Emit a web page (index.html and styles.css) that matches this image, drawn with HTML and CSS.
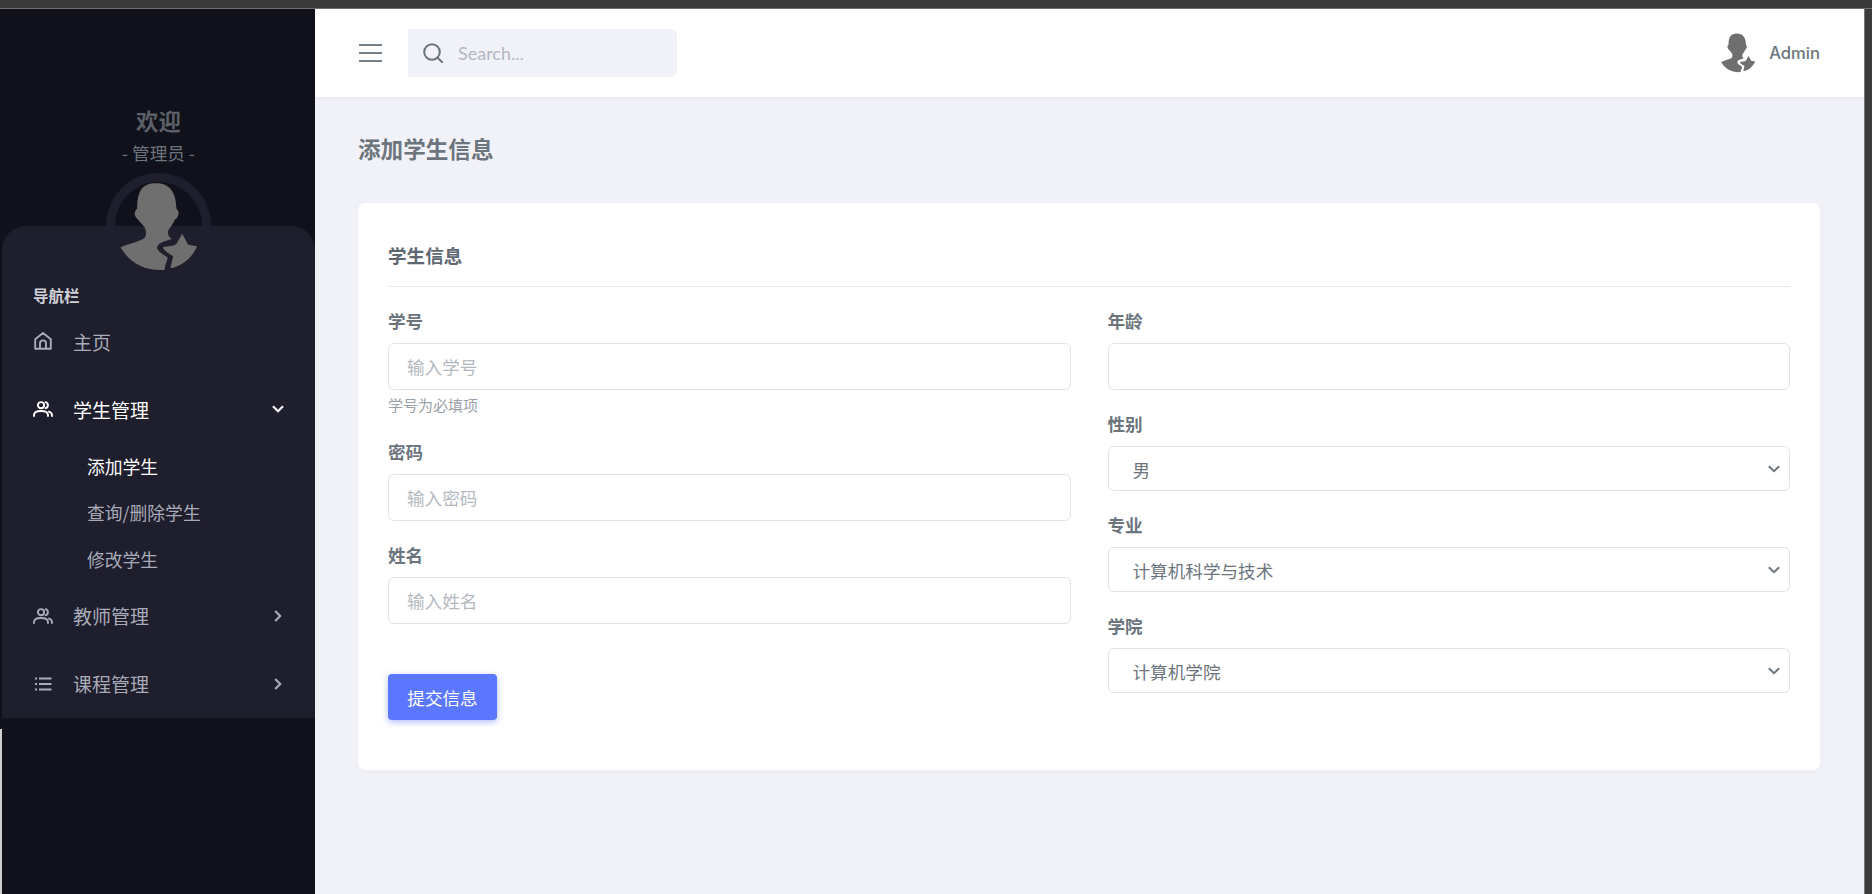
FILE: index.html
```html
<!DOCTYPE html>
<html lang="zh-CN">
<head>
<meta charset="utf-8">
<title>添加学生信息</title>
<link rel="stylesheet" href="styles.css">
</head>
<body>
<svg class="defs" width="0" height="0" aria-hidden="true">
  <symbol id="person" viewBox="355 545 242 270">
    <path fill="#6f6f6f" d="M468 549C508 549 528 572 530 626C540 632 538 650 525 658C520 668 514 678 508 686C500 696 506 710 516 716C498 722 476 726 472 740C470 752 490 762 504 772C500 785 495 796 494 809C430 812 388 785 362 741C385 730 410 727 430 716C442 708 440 690 432 678C425 670 420 664 415 658C402 650 402 632 412 625C412 572 428 549 468 549Z"/>
    <path fill="#6f6f6f" d="M547 700L565 733L592 738C578 770 550 796 512 804C514 790 518 778 520 768C505 758 488 748 490 740C505 736 522 738 530 730Z"/>
  </symbol>
  <symbol id="users" viewBox="0 0 20 16">
    <circle cx="8" cy="4.2" r="3.1" fill="none" stroke="currentColor" stroke-width="1.9"/>
    <path d="M1 15v-.8C1 11.6 3.5 10 8 10s7 1.6 7 4.2v.8" fill="none" stroke="currentColor" stroke-width="1.9" stroke-linecap="round"/>
    <path d="M12.6 1.2a3.1 3.1 0 0 1 0 6M16 10.6c1.8.6 3 1.8 3 3.6v.8" fill="none" stroke="currentColor" stroke-width="1.9" stroke-linecap="round"/>
  </symbol>
</svg>

<div class="topbar"></div>
<div class="frame">
  <div class="edge-left"><div class="edge-dark"></div><div class="edge-light"></div></div>

  <aside class="sidebar">
    <div class="profile">
      <div class="welcome">欢迎</div>
      <div class="role">- 管理员 -</div>
      <div class="avatar">
        <svg class="avatar-img"><use href="#person"/></svg>
      </div>
    </div>
    <nav class="panel">
      <div class="nav-label">导航栏</div>
      <a class="nav-item">
        <svg class="nav-icon" viewBox="0 0 20 18" fill="none" stroke="currentColor" stroke-width="1.9" stroke-linejoin="round"><path d="M2.2 16.8V7.2L10 1l7.8 6.2v9.6zM7 16.8v-5.4a3 3 0 0 1 6 0v5.4"/></svg>
        <span>主页</span>
      </a>
      <a class="nav-item active">
        <svg class="nav-icon"><use href="#users"/></svg>
        <span>学生管理</span>
        <svg class="chev chev-down" viewBox="0 0 12 8" fill="none" stroke="currentColor" stroke-width="2.2"><path d="M1 1.2l5 5 5-5"/></svg>
      </a>
      <div class="sub-item active">添加学生</div>
      <div class="sub-item">查询/删除学生</div>
      <div class="sub-item">修改学生</div>
      <a class="nav-item">
        <svg class="nav-icon"><use href="#users"/></svg>
        <span>教师管理</span>
        <svg class="chev chev-right" viewBox="0 0 8 12" fill="none" stroke="currentColor" stroke-width="2.2"><path d="M1.2 1l5 5-5 5"/></svg>
      </a>
      <a class="nav-item">
        <svg class="nav-icon" viewBox="0 0 20 14" fill="none" stroke="currentColor" stroke-width="1.9"><path d="M6 1.5h12.5M6 7h12.5M6 12.5h12.5M2 1.5h2M2 7h2M2 12.5h2"/></svg>
        <span>课程管理</span>
        <svg class="chev chev-right" viewBox="0 0 8 12" fill="none" stroke="currentColor" stroke-width="2.2"><path d="M1.2 1l5 5-5 5"/></svg>
      </a>
    </nav>
    <div class="sidebar-rest"></div>
  </aside>

  <div class="content">
    <header class="header">
      <div class="hamburger"><i></i><i></i><i></i></div>
      <div class="search">
        <svg class="search-icon" viewBox="0 0 20 20" fill="none" stroke="#6c757d" stroke-width="2"><circle cx="9" cy="9" r="7.8"/><path d="M14.6 14.6l4.6 4.6" stroke-linecap="round"/></svg>
        <span class="search-text">Search...</span>
      </div>
      <div class="user">
        <svg class="user-img"><use href="#person"/></svg>
        <span class="user-name">Admin</span>
      </div>
    </header>

    <main class="main">
      <h1 class="page-title">添加学生信息</h1>
      <section class="card">
        <h2 class="card-title">学生信息</h2>
        <form class="form-grid">
          <div class="col">
            <div class="group group-hint">
              <label class="label">学号</label>
              <input class="field" placeholder="输入学号">
              <small class="hint">学号为必填项</small>
            </div>
            <div class="group">
              <label class="label">密码</label>
              <input class="field" placeholder="输入密码">
            </div>
            <div class="group">
              <label class="label">姓名</label>
              <input class="field" placeholder="输入姓名">
            </div>
            <button class="submit" type="button">提交信息</button>
          </div>
          <div class="col">
            <div class="group">
              <label class="label">年龄</label>
              <input class="field">
            </div>
            <div class="group">
              <label class="label">性别</label>
              <select class="field field-select"><option>男</option></select>
            </div>
            <div class="group">
              <label class="label">专业</label>
              <select class="field field-select"><option>计算机科学与技术</option></select>
            </div>
            <div class="group">
              <label class="label">学院</label>
              <select class="field field-select"><option>计算机学院</option></select>
            </div>
          </div>
        </form>
      </section>
    </main>
  </div>

  <div class="edge-right"></div>
</div>
</body>
</html>
```

FILE: styles.css
```css
* { box-sizing: border-box; }
html, body { margin: 0; height: 100%; }
body {
  font-family: "Noto Sans CJK SC", "Liberation Sans", sans-serif;
  background: #f1f2f8;
  color: #6c757d;
  overflow: hidden;
  height: 894px;
  display: flex;
  flex-direction: column;
}
.defs { position: absolute; }
.topbar { height: 9px; flex: none; background: #3a3a3a; border-bottom: 1px solid #707070; }
.frame { flex: 1; display: flex; min-height: 0; }

.edge-left { width: 2px; flex: none; display: flex; flex-direction: column; }
.edge-dark { height: 720px; background: #10111a; }
.edge-light { flex: 1; background: #cfcfcf; }
.edge-right { width: 8px; flex: none; background: #3c3c3c; border-left: 1px solid #777; }

.sidebar { width: 313px; flex: none; display: flex; flex-direction: column; background: #10111a; }
.profile { height: 217px; flex: none; display: flex; flex-direction: column; align-items: center; padding-top: 93px; }
.welcome { font-size: 22.4px; line-height: 36px; font-weight: 700; color: #5b6068; }
.role { font-size: 17.6px; line-height: 24px; margin-top: 3px; color: #6c757d; }
.avatar { width: 105px; height: 105px; flex: none; margin-top: 8px; border-radius: 50%; border: 9px solid #1e1e2d; position: relative; }
.avatar-img { position: absolute; z-index: 2; left: 3px; top: 0; width: 81px; height: 90px; }

.panel { position: relative; z-index: 1; flex: none; height: 492px; background: #1e1e2d; border-radius: 24px 24px 0 0; padding-top: 57px; color: #a9acb8; }
.nav-label { font-size: 15.5px; line-height: 24px; font-weight: 700; color: #cfd0d8; padding-left: 31px; }
.nav-item { height: 68px; display: flex; align-items: center; font-size: 19px; padding-left: 31px; padding-right: 31px; }
.nav-item span { flex: 1; margin-left: 20px; }
.nav-item.active, .sub-item.active { color: #fff; }
.nav-icon { width: 20px; height: 18px; flex: none; }
.chev { flex: none; }
.chev-down { width: 12px; height: 8px; }
.chev-right { width: 8px; height: 12px; margin-right: 2px; }
.sub-item { height: 46.3px; line-height: 47px; font-size: 17.8px; padding-left: 85px; }
.sidebar-rest { flex: 1; }

.content { flex: 1; min-width: 0; display: flex; flex-direction: column; }
.header { height: 88px; flex: none; background: #fff; display: flex; align-items: center; padding: 0 44px; box-shadow: 0 1px 4px rgba(40, 40, 80, .05); }
.hamburger { width: 23px; display: flex; flex-direction: column; gap: 5.6px; margin-right: 26px; }
.hamburger i { display: block; height: 2.4px; background: #74808a; }
.search { width: 269px; height: 48px; background: #f1f2f8; border-radius: 0 6px 6px 0; display: flex; align-items: center; padding-left: 15px; }
.search-icon { width: 20px; height: 20px; flex: none; }
.search-text { margin-left: 15px; font-family: "Lato", sans-serif; font-size: 18px; color: #b3b7c0; }
.user { margin-left: auto; display: flex; align-items: center; }
.user-img { width: 36px; height: 40px; }
.user-name { margin-left: 13px; font-family: "Inter", sans-serif; font-size: 16.6px; font-weight: 500; color: #6c757d; }

.main { flex: 1; padding: 35px 44px 0 43px; }
.page-title { margin: 0; font-size: 22.6px; line-height: 34px; font-weight: 700; color: #6c757d; }
.card { margin-top: 37px; height: 567px; background: #fff; border-radius: 7px; padding: 38px 30px 0; box-shadow: 0 2px 6px rgba(40, 40, 80, .03); }
.card-title { margin: 0; font-size: 18.6px; line-height: 28px; font-weight: 700; color: #5f6872; padding-bottom: 17px; border-bottom: 1px solid #e5e8ee; }
.form-grid { margin-top: 21px; display: grid; grid-template-columns: 1fr 1fr; column-gap: 37px; }
.group { margin-bottom: 21px; }
.group-hint { margin-bottom: 24px; }
.label { display: block; font-size: 17.6px; line-height: 26px; font-weight: 700; color: #6c757d; margin-bottom: 9px; }
.field { display: block; width: 100%; height: 47px; padding: 0 18px; background: #fff; border: 1px solid #e2e3e8; border-radius: 6px; font: inherit; font-size: 17.6px; color: #6c757d; outline: none; }
.field::placeholder { color: #b4b9bf; }
.field-select { height: 45px; padding: 1px 24px 0; appearance: none; background: #fff url("data:image/svg+xml,%3Csvg xmlns='http://www.w3.org/2000/svg' width='12' height='8' fill='none' stroke='%236c757d' stroke-width='2'%3E%3Cpath d='M.8 1.2l5.2 5 5.2-5'/%3E%3C/svg%3E") no-repeat right 9px center; }
.hint { display: block; font-size: 15px; line-height: 21px; margin-top: 4px; color: #9aa1a8; }
.submit { display: block; margin-top: 50px; width: 109px; height: 46px; border: 0; border-radius: 4px; background: #5c77ff; color: #fff; font: inherit; font-size: 17.6px; box-shadow: 0 2px 6px rgba(92, 119, 255, .5); }
```
